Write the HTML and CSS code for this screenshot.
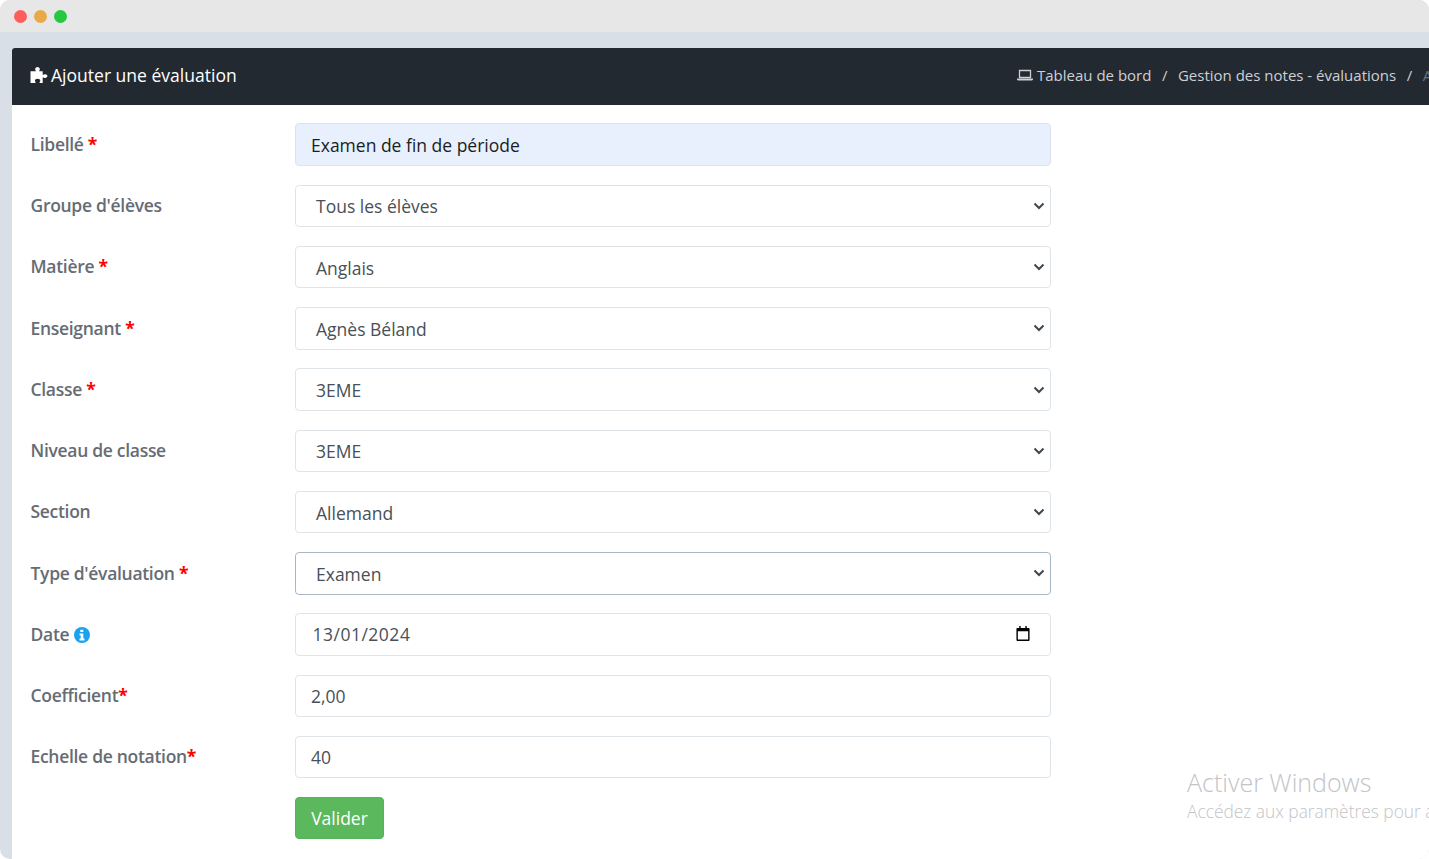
FILE: index.html
```html
<!DOCTYPE html>
<html lang="fr">
<head>
<meta charset="utf-8">
<title>Ajouter une évaluation</title>
<link rel="stylesheet" href="styles.css">
</head>
<body>
<div class="window">
  <div class="titlebar">
    <span class="dot dot-red"></span><span class="dot dot-amber"></span><span class="dot dot-green"></span>
  </div>
  <div class="desk">
    <main class="card">
      <header class="card-head">
        <h1 class="title">
          <svg class="icon-puzzle" viewBox="0 0 18 16"><path d="M5.800 4.200V3.700C5.300 3.200 5.200 2.700 5.200 2.200 5.200 1 6.200 0 7.500 0s2.300 1 2.300 2.200c0 .5-.2 1-.6 1.500v.5h3.500v3.600h1c.5-.4.900-.5 1.400-.5 1.300 0 2.300.8 2.300 1.800s-1 1.800-2.300 1.800c-.5 0-.9-.1-1.400-.5h-1V16H9.600v-1.100c.4-.4.700-.8.700-1.300 0-1-1.100-1.900-2.700-1.900s-2.700.9-2.700 1.900c0 .5.200.9.600 1.300V16H.5V4.200z" fill="#fff"/></svg>
          <span>Ajouter une évaluation</span>
        </h1>
        <nav class="crumbs">
          <a class="crumb">
            <svg class="icon-laptop" viewBox="0 0 16 12"><path d="M2.500 1.500h11v7h-11z" fill="none" stroke="#ccd0d4" stroke-width="1.300"/><path d="M0 9.400h16v.8c0 .7-.5 1.200-1.200 1.200H1.200C.5 11.400 0 10.900 0 10.200z" fill="#ccd0d4"/></svg>
            Tableau de bord
          </a>
          <span class="sep">/</span>
          <a class="crumb">Gestion des notes - évaluations</a>
          <span class="sep">/</span>
          <span class="crumb-current">Ajouter</span>
        </nav>
      </header>
      <form class="form">
        <div class="row"><label class="label">Libellé <b class="req">*</b></label><input class="field field-filled" type="text" value="Examen de fin de période"></div>
        <div class="row"><label class="label">Groupe d'élèves</label><div class="select">Tous les élèves<svg class="chev" viewBox="0 0 12 8"><path d="M1.500 1.500 6 6l4.500-4.500" fill="none" stroke="#3f4750" stroke-width="2"/></svg></div></div>
        <div class="row"><label class="label">Matière <b class="req">*</b></label><div class="select">Anglais<svg class="chev" viewBox="0 0 12 8"><path d="M1.500 1.500 6 6l4.500-4.500" fill="none" stroke="#3f4750" stroke-width="2"/></svg></div></div>
        <div class="row"><label class="label">Enseignant <b class="req">*</b></label><div class="select">Agnès Béland<svg class="chev" viewBox="0 0 12 8"><path d="M1.500 1.500 6 6l4.500-4.500" fill="none" stroke="#3f4750" stroke-width="2"/></svg></div></div>
        <div class="row"><label class="label">Classe <b class="req">*</b></label><div class="select">3EME<svg class="chev" viewBox="0 0 12 8"><path d="M1.500 1.500 6 6l4.500-4.500" fill="none" stroke="#3f4750" stroke-width="2"/></svg></div></div>
        <div class="row"><label class="label">Niveau de classe</label><div class="select">3EME<svg class="chev" viewBox="0 0 12 8"><path d="M1.500 1.500 6 6l4.500-4.500" fill="none" stroke="#3f4750" stroke-width="2"/></svg></div></div>
        <div class="row"><label class="label">Section</label><div class="select">Allemand<svg class="chev" viewBox="0 0 12 8"><path d="M1.500 1.500 6 6l4.500-4.500" fill="none" stroke="#3f4750" stroke-width="2"/></svg></div></div>
        <div class="row"><label class="label">Type d'évaluation <b class="req">*</b></label><div class="select select-focus">Examen<svg class="chev" viewBox="0 0 12 8"><path d="M1.500 1.500 6 6l4.500-4.500" fill="none" stroke="#3f4750" stroke-width="2"/></svg></div></div>
        <div class="row"><label class="label">Date <svg class="icon-info" viewBox="0 0 16 16"><circle cx="8" cy="8" r="8" fill="#1ba1f2"/><path d="M6.300 2.700h3v2.400h-3zM5.500 6.400h3.800v5.200h1.200v1.800H5.500v-1.800h1.200V8.200H5.500z" fill="#fff"/></svg></label><div class="date"><span>13/01/2024</span><svg class="icon-cal" viewBox="0 0 14 16"><path d="M3 0h1.500v2h5V0H11v2h2.200c.4 0 .8.400.8.800V15c0 .5-.4 1-.8 1H.8C.4 16 0 15.500 0 15V2.800c0-.4.400-.8.800-.8H3zM1.500 5.500v9h11v-9z" fill="#000"/></svg></div></div>
        <div class="row"><label class="label">Coefficient<b class="req">*</b></label><input class="field" type="text" value="2,00"></div>
        <div class="row"><label class="label">Echelle de notation<b class="req">*</b></label><input class="field" type="text" value="40"></div>
        <div class="row"><span></span><div><button class="btn" type="button">Valider</button></div></div>
      </form>
      <aside class="watermark">
        <div class="wm-title">Activer Windows</div>
        <div class="wm-sub">Accédez aux paramètres pour activer Windows.</div>
      </aside>
    </main>
  </div>
</div>
</body>
</html>
```
FILE: styles.css
```css
* { box-sizing: border-box; }
html, body { margin: 0; height: 100%; background: #fff; overflow: hidden; }
body { font-family: "Open Sans", "Noto Sans", sans-serif; font-size: 17.500px; color: #495057; }
.window { width: 1429px; height: 859px; display: flex; flex-direction: column; border-radius: 10px; overflow: hidden; background: #d8dfe7; }
.titlebar { height: 32px; background: #e7e7e7; display: flex; align-items: center; gap: 7px; padding: 1px 0 0 14px; flex: none; }
.dot { width: 13px; height: 13px; border-radius: 50%; }
.dot-red { background: #fb5f5c; }
.dot-amber { background: #e6aa4a; }
.dot-green { background: #27c840; }
.desk { flex: 1; padding: 16px 0 0 12px; min-height: 0; }
.card { position: relative; background: #fff; height: 100%; border-radius: 3px 0 0 0; overflow: hidden; }
.card-head { height: 57px; background: #232931; color: #fff; display: flex; align-items: center; justify-content: space-between; padding: 0 0 4px 18px; white-space: nowrap; overflow: hidden; }
.title { margin: 0; font-size: 17.550px; font-weight: 400; display: flex; align-items: center; gap: 3px; }
.icon-puzzle { width: 18px; height: 16px; }
.crumbs { display: flex; align-items: center; font-size: 15px; color: #ccd0d4; width: 412px; flex: none; }
.crumb { display: inline-flex; align-items: center; gap: 4px; }
.icon-laptop { width: 16px; height: 12px; }
.sep { padding: 0 10.500px; }
.crumb-current { color: #6c757d; }
.form { display: flex; flex-direction: column; gap: 18.750px; padding: 18.300px 0 0 18.500px; }
.row { display: grid; grid-template-columns: 264.500px 756px; align-items: center; height: 42.500px; }
.label { font-size: 17.500px; font-weight: 600; color: #666c74; letter-spacing: -0.3px; white-space: nowrap; padding-bottom: 1.200px; }
.req { color: #f00; font-weight: 700; font-size: 17.500px; letter-spacing: 0; }
.field, .select, .date { height: 42.500px; width: 756px; border: 1px solid #dfe4e8; border-radius: 4px; background: #fff; color: #495057; font-family: inherit; font-size: 17.500px; display: flex; align-items: center; outline: none; }
.field { padding: 0 15px; }
.field-filled { background: #e8f0fe; color: #1a1d21; border-color: #dbe3ee; }
.select { position: relative; padding: 1px 20px 0; }
.select-focus { border-color: #a9b7c4; }
.chev { position: absolute; right: 5px; top: 50%; margin-top: -4px; width: 12px; height: 8px; }
.date { justify-content: space-between; padding: 0 20px 2px 16.500px; letter-spacing: 0.500px; }
.icon-cal { width: 14px; height: 15px; }
.icon-info { width: 16px; height: 16px; vertical-align: -2px; }
.btn { width: 89px; height: 42.300px; border: 1px solid #55b25e; border-radius: 4px; background: #5cb85c; color: #fff; font-family: inherit; font-size: 17.500px; padding: 0; }
.watermark { position: absolute; left: 1175px; top: 717.500px; width: 400px; color: #c3c4c6; white-space: nowrap; font-family: "Open Sans", sans-serif; }
.wm-title { font-size: 25px; line-height: 32px; font-weight: 300; }
.wm-sub { font-size: 17.350px; line-height: 26px; font-weight: 300; }
```
